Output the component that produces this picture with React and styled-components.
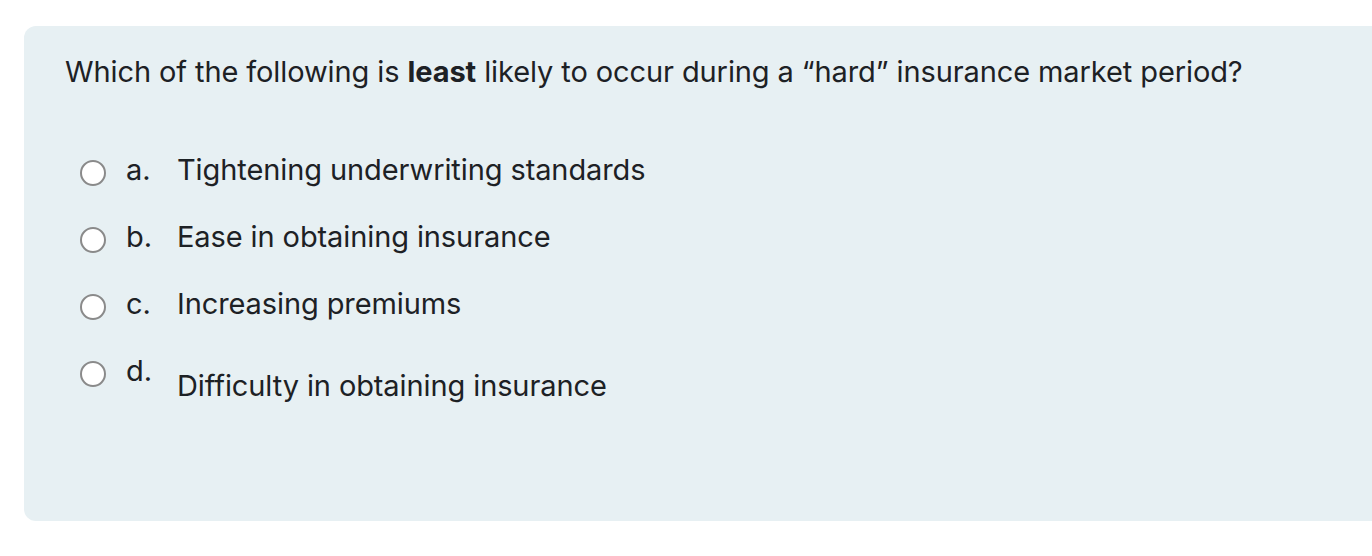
import React from "react";
import styled, { createGlobalStyle } from "styled-components";

const GlobalStyle = createGlobalStyle`
  html, body {
    margin: 0;
    background: #ffffff;
    overflow: hidden;
  }
  body {
    font-family: Inter, "Liberation Sans", sans-serif;
    color: #1d2125;
  }
`;

const Page = styled.div`
  padding: 26px 0 0 24px;
`;

const Panel = styled.div`
  width: 1400px;
  height: 495px;
  box-sizing: border-box;
  background: #e7f0f3;
  border-radius: 12px 0 0 12px;
  padding: 24px 0 0 41px;
`;

const Question = styled.p`
  margin: 0;
  font-size: 29px;
  line-height: 44px;
  letter-spacing: -0.1px;
`;

const Options = styled.div`
  margin-top: 54px;
  padding-left: 15px;
  display: flex;
  flex-direction: column;
  gap: 23px;
`;

const Row = styled.label`
  display: flex;
  align-items: flex-start;
  font-size: 29px;
  line-height: 44px;
`;

const Radio = styled.span`
  flex: none;
  width: 22px;
  height: 22px;
  margin-top: 12px;
  border: 2px solid #8a8a8a;
  border-radius: 50%;
  background: #ffffff;
`;

const Letter = styled.span`
  width: 51px;
  margin-left: 20px;
  flex: none;
`;

const Text = styled.span`
  margin-top: ${(p) => (p.$drop ? "15px" : "0")};
  letter-spacing: -0.1px;
`;

const options = [
  ["a.", "Tightening underwriting standards"],
  ["b.", "Ease in obtaining insurance"],
  ["c.", "Increasing premiums"],
  ["d.", "Difficulty in obtaining insurance", true],
];

export default function App() {
  return (
    <>
      <GlobalStyle />
      <Page>
        <Panel>
          <Question>
            Which of the following is <b>least</b> likely to occur during a
            {" \u201Chard\u201D "}insurance market period?
          </Question>
          <Options>
            {options.map(([letter, text, drop]) => (
              <Row key={letter}>
                <Radio />
                <Letter>{letter}</Letter>
                <Text $drop={drop}>{text}</Text>
              </Row>
            ))}
          </Options>
        </Panel>
      </Page>
    </>
  );
}
